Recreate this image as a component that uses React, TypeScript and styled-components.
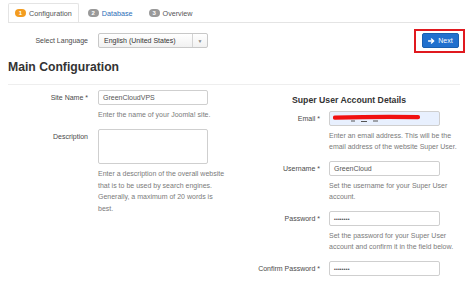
import React from 'react';
import styled, { createGlobalStyle } from 'styled-components';

const GlobalStyle = createGlobalStyle`
    body {
        margin: 0;
        background: #fff;
        font-family: "Liberation Sans", Arial, sans-serif;
        color: #333;
    }
`
const Page = styled.div`
    width: 474px;
    height: 286px;
    box-sizing: border-box;
    padding: 3px 14px 0 8px;
    overflow: hidden;
`
const TabBar = styled.div`
    display: flex;
    height: 19px;
    border-bottom: 1px solid #e4e4e4;
`
const Tab = styled.div<{ $active?: boolean }>`
    display: flex;
    align-items: center;
    gap: 3px;
    padding: 0 6px;
    margin-right: 2px;
    font-size: 7.2px;
    color: ${p => (p.$active ? '#444' : '#2a6db8')};
    background: #fff;
    border: 1px solid ${p => (p.$active ? '#e4e4e4' : 'transparent')};
    border-bottom: none;
    border-radius: 2px 2px 0 0;
    margin-bottom: -1px;
    height: 19px;
    box-sizing: border-box;
`
const Badge = styled.span<{ $color: string }>`
    display: inline-flex;
    align-items: center;
    justify-content: center;
    width: 11px;
    height: 8px;
    border-radius: 5px;
    background: ${p => p.$color};
    color: #fff;
    font-size: 6px;
    font-weight: bold;
`
const TabText = styled.span<{ $dark?: boolean }>`
    color: ${p => (p.$dark ? '#555' : 'inherit')};
`
const TopRow = styled.div`
    display: flex;
    justify-content: space-between;
    align-items: center;
    margin-top: 10px;
    height: 15px;
`
const Field = styled.div<{ $labelWidth: number; $gap: number }>`
    display: grid;
    grid-template-columns: ${p => p.$labelWidth}px auto;
    column-gap: ${p => p.$gap}px;
    align-items: start;
`
const Label = styled.div`
    font-size: 7px;
    line-height: 15px;
    color: #4a4a4a;
    text-align: right;
    white-space: nowrap;
`
const Select = styled.div`
    display: flex;
    width: 110px;
    height: 15px;
    box-sizing: border-box;
    border: 1px solid #c8c8c8;
    border-radius: 2px;
    background: linear-gradient(#fff, #f1f1f1);
    font-size: 7px;
    color: #333;
`
const SelectValue = styled.div`
    flex: 1;
    padding-left: 5px;
    line-height: 13px;
`
const SelectArrow = styled.div`
    width: 14px;
    border-left: 1px solid #d4d4d4;
    display: flex;
    align-items: center;
    justify-content: center;
    color: #888;
    font-size: 5px;
`
const ButtonWrap = styled.div`
    position: relative;
    margin-right: 1px;
    &::after {
        content: '';
        position: absolute;
        top: -4px;
        bottom: -5px;
        left: -8px;
        right: -6px;
        border: 2px solid #e0191f;
    }
`
const NextButton = styled.button`
    display: flex;
    align-items: center;
    justify-content: center;
    gap: 3px;
    width: 37px;
    height: 15px;
    padding: 0;
    border: 1px solid #1a5fb0;
    border-radius: 2px;
    background: #2170ce;
    color: #fff;
    font-family: "Liberation Sans", Arial, sans-serif;
    font-size: 7px;
`
const Heading = styled.h1`
    margin: 12px 0 0;
    padding-bottom: 9px;
    font-size: 12.2px;
    line-height: 15px;
    font-weight: bold;
    color: #333;
    border-bottom: 1px solid #eeeeee;
`
const Columns = styled.div`
    display: grid;
    grid-template-columns: 232px 1fr;
`
const Column = styled.div<{ $top: number }>`
    display: flex;
    flex-direction: column;
    gap: 9px;
    padding-top: ${p => p.$top}px;
`
const SubHeading = styled.h3`
    margin: 0 0 -4px 52px;
    font-size: 8.7px;
    line-height: 11px;
    font-weight: bold;
    color: #333;
`
const Controls = styled.div<{ $width: number }>`
    width: ${p => p.$width}px;
    position: relative;
`
const Input = styled.div<{ $width: number; $filled?: boolean }>`
    width: ${p => p.$width}px;
    height: 15px;
    box-sizing: border-box;
    border: 1px solid #cfcfcf;
    border-radius: 2px;
    background: ${p => (p.$filled ? '#e8f0fe' : '#fff')};
    font-size: 7px;
    line-height: 13px;
    padding-left: 4px;
    color: #555;
    position: relative;
`
const TextArea = styled(Input)`
    height: 35px;
`
const Dots = styled.span`
    font-size: 5px;
    letter-spacing: 0.2px;
    color: #444;
`
const Help = styled.div<{ $lh?: number }>`
    margin-top: 4px;
    font-size: 7px;
    line-height: ${p => p.$lh ?? 11}px;
    color: #7a7a7a;
    white-space: pre-line;
`
const Redaction = styled.svg`
    position: absolute;
    left: 3px;
    top: 1px;
`

const ArrowIcon = () => (
    <svg width="7" height="6" viewBox="0 0 7 6">
        <path d="M0.5 3 H5.5 M3.5 1 L5.7 3 L3.5 5" stroke="#fff" strokeWidth="1.4" fill="none" strokeLinecap="round" strokeLinejoin="round" />
    </svg>
)

type RowProps = {
    label: string,
    labelWidth: number,
    gap: number,
    width: number,
    help?: string,
    helpLine?: number,
    children: React.ReactNode,
}
const FormRow: React.FC<RowProps> = (props) => (
    <Field $labelWidth={props.labelWidth} $gap={props.gap}>
        <Label>{props.label}</Label>
        <Controls $width={props.width}>
            {props.children}
            {props.help && <Help $lh={props.helpLine}>{props.help}</Help>}
        </Controls>
    </Field>
)

const App: React.FC = () => {
    return (
        <Page>
            <GlobalStyle />
            <TabBar>
                <Tab $active><Badge $color="#f39c1f">1</Badge><TabText $dark>Configuration</TabText></Tab>
                <Tab><Badge $color="#999">2</Badge><TabText>Database</TabText></Tab>
                <Tab><Badge $color="#999">3</Badge><TabText $dark>Overview</TabText></Tab>
            </TabBar>
            <TopRow>
                <Field $labelWidth={80} $gap={10}>
                    <Label>Select Language</Label>
                    <Select>
                        <SelectValue>English (United States)</SelectValue>
                        <SelectArrow>▼</SelectArrow>
                    </Select>
                </Field>
                <ButtonWrap>
                    <NextButton><ArrowIcon />Next</NextButton>
                </ButtonWrap>
            </TopRow>
            <Heading>Main Configuration</Heading>
            <Columns>
                <Column $top={5}>
                    <FormRow label="Site Name *" labelWidth={80} gap={10} width={132}
                        help="Enter the name of your Joomla! site.">
                        <Input $width={110}>GreenCloudVPS</Input>
                    </FormRow>
                    <FormRow label="Description" labelWidth={80} gap={10} width={132} helpLine={11.5}
                        help={'Enter a description of the overall website\nthat is to be used by search engines.\nGenerally, a maximum of 20 words is\nbest.'}>
                        <TextArea $width={110} />
                    </FormRow>
                </Column>
                <Column $top={10}>
                    <SubHeading>Super User Account Details</SubHeading>
                    <FormRow label="Email *" labelWidth={80} gap={9} width={132}
                        help={'Enter an email address. This will be the\nemail address of the website Super User.'}>
                        <Input $width={111} $filled>
                            <Redaction width="88" height="10" viewBox="0 0 88 10">
                                <path d="M18 8 h4 M28 8.5 h6 M40 8 h5" stroke="#555" strokeWidth="1.2" />
                                <path d="M2 4.6 C20 4.2 50 3.6 85 4.2" stroke="#f01010" strokeWidth="4.2" strokeLinecap="round" fill="none" />
                            </Redaction>
                        </Input>
                    </FormRow>
                    <FormRow label="Username *" labelWidth={80} gap={9} width={132}
                        help={'Set the username for your Super User\naccount.'}>
                        <Input $width={111}>GreenCloud</Input>
                    </FormRow>
                    <FormRow label="Password *" labelWidth={80} gap={9} width={132}
                        help={'Set the password for your Super User\naccount and confirm it in the field below.'}>
                        <Input $width={111}><Dots>••••••••</Dots></Input>
                    </FormRow>
                    <FormRow label="Confirm Password *" labelWidth={80} gap={9} width={132}>
                        <Input $width={111}><Dots>••••••••</Dots></Input>
                    </FormRow>
                </Column>
            </Columns>
        </Page>
    );
};

export default App;
